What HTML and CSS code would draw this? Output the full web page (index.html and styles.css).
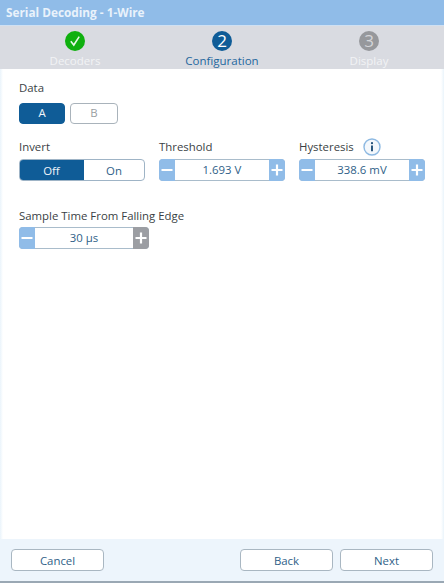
FILE: index.html
```html
<!DOCTYPE html>
<html lang="en">
<head>
<meta charset="utf-8">
<title>Serial Decoding - 1-Wire</title>
<link rel="stylesheet" href="styles.css">
</head>
<body>
<div class="window">
  <header class="titlebar">Serial Decoding - 1-Wire</header>
  <nav class="steps">
    <div class="step">
      <svg class="step-icon" viewBox="0 0 20 20" width="20" height="20"><circle cx="10" cy="10" r="10" fill="#0fb00f"/><path d="M5.8 10.2 8.8 14 14.2 5.6" fill="none" stroke="#e6f7e6" stroke-width="1.6"/></svg>
      <span class="step-label step-label-idle">Decoders</span>
    </div>
    <div class="step">
      <span class="step-num step-num-active">2</span>
      <span class="step-label step-label-active">Configuration</span>
    </div>
    <div class="step">
      <span class="step-num step-num-idle">3</span>
      <span class="step-label step-label-idle">Display</span>
    </div>
  </nav>
  <main class="content">
    <section class="group group-data">
      <div class="label">Data</div>
      <div class="choice">
        <button class="chip chip-on">A</button>
        <button class="chip chip-off">B</button>
      </div>
    </section>
    <section class="row">
      <div class="field">
        <div class="label">Invert</div>
        <div class="toggle">
          <span class="toggle-opt toggle-on">Off</span>
          <span class="toggle-opt">On</span>
        </div>
      </div>
      <div class="field">
        <div class="label">Threshold</div>
        <div class="spin">
          <span class="spin-btn"><svg viewBox="0 0 16 22" width="16" height="22"><path d="M2.5 11h11" stroke="#fff" stroke-width="2.2"/></svg></span>
          <span class="spin-val">1.693 V</span>
          <span class="spin-btn"><svg viewBox="0 0 16 22" width="16" height="22"><path d="M2.5 11h11M8 5.5v11" stroke="#fff" stroke-width="2.2"/></svg></span>
        </div>
      </div>
      <div class="field">
        <div class="label label-info">Hysteresis
          <svg class="info" viewBox="0 0 18 18" width="18" height="18"><circle cx="9" cy="9" r="8" fill="#f4f8fc" stroke="#8db9e2" stroke-width="1.4"/><circle cx="9" cy="5.2" r="1.1" fill="#1f4e78"/><path d="M9 7.6v5.6" stroke="#1f4e78" stroke-width="1.9"/></svg>
        </div>
        <div class="spin">
          <span class="spin-btn"><svg viewBox="0 0 16 22" width="16" height="22"><path d="M2.5 11h11" stroke="#fff" stroke-width="2.2"/></svg></span>
          <span class="spin-val">338.6 mV</span>
          <span class="spin-btn"><svg viewBox="0 0 16 22" width="16" height="22"><path d="M2.5 11h11M8 5.5v11" stroke="#fff" stroke-width="2.2"/></svg></span>
        </div>
      </div>
    </section>
    <section class="group group-sample">
      <div class="label">Sample Time From Falling Edge</div>
      <div class="spin spin-wide">
        <span class="spin-btn"><svg viewBox="0 0 16 22" width="16" height="22"><path d="M2.5 11h11" stroke="#fff" stroke-width="2.2"/></svg></span>
        <span class="spin-val">30 µs</span>
        <span class="spin-btn spin-btn-off"><svg viewBox="0 0 16 22" width="16" height="22"><path d="M2.5 11h11M8 5.5v11" stroke="#fff" stroke-width="2.2"/></svg></span>
      </div>
    </section>
  </main>
  <footer class="footer">
    <button class="action">Cancel</button>
    <div class="footer-right">
      <button class="action">Back</button>
      <button class="action">Next</button>
    </div>
  </footer>
</div>
</body>
</html>
```

FILE: styles.css
```css
* { box-sizing: border-box; }
html, body { margin: 0; padding: 0; }
body { width: 444px; height: 583px; overflow: hidden; background: #fff; font-family: "Open Sans", "Noto Sans", sans-serif; font-size: 11.4px; color: #3a3f45; }
.window { width: 444px; height: 583px; display: flex; flex-direction: column; border-bottom: 2px solid #9aa8b4; }
.titlebar { height: 26px; flex: none; background: #90bce8; border-bottom: 1px solid #cfe0f2; color: #e9f2fb; font-weight: 700; font-size: 11.8px; line-height: 25px; padding-left: 6px; }
.steps { height: 43px; flex: none; display: grid; grid-template-columns: repeat(3, 147px); padding-left: 1.5px; background: #d9dbe1; }
.step { display: flex; flex-direction: column; align-items: center; padding-top: 5px; }
.step-icon { display: block; }
.step-num { width: 20px; height: 20px; border-radius: 50%; display: flex; align-items: center; justify-content: center; font-size: 17px; line-height: 20px; color: #e8eef4; }
.step-num-active { background: #0f5c97; color: #fff; }
.step-num-idle { background: #96989c; color: #d4d5d8; }
.step-label { font-size: 11.5px; line-height: 16px; margin-top: 2px; white-space: nowrap; }
.step-label-idle { color: #f2f3f5; }
.step-label-active { color: #24679e; }
.content { flex: 1; padding: 11px 19px 0; background: linear-gradient(90deg, #eaf4fb 0, #fff 3px, #fff 441px, #eaf4fb 444px); }
.label { line-height: 16px; height: 16px; color: #3a3f45; }
.choice { display: flex; gap: 5px; margin-top: 7px; }
.chip { height: 21px; border-radius: 4px; font: inherit; padding: 0 0 2px; }
.chip-on { width: 46px; background: #0f5c97; border: 1px solid #0f5c97; color: #f0f5fa; }
.chip-off { width: 48px; background: #fff; border: 1px solid #a9b3bb; color: #9a9ea2; }
.row { display: grid; grid-template-columns: 126px 126px 126px; column-gap: 14px; margin-top: 15px; }
.label-info { display: flex; align-items: center; gap: 9px; margin-top: -1px; height: 17px; }
.toggle { display: grid; grid-template-columns: 64px 62px; height: 22px; margin-top: 4px; border: 1px solid #9fb4c6; border-radius: 4px; overflow: hidden; background: #fff; }
.toggle-opt { display: flex; align-items: center; justify-content: center; color: #2f5f88; padding-right: 2px; }
.toggle-on { background: #0f5c97; color: #f0f5fa; margin: -1px 0 -1px -1px; padding-right: 0; }
.spin { display: flex; height: 22px; margin-top: 4px; border-radius: 4px; overflow: hidden; background: #fff; box-shadow: inset 0 0 0 1px #a9bccb; }
.spin-wide { width: 130px; }
.spin-btn { width: 16px; flex: none; background: #90bce8; display: flex; }
.spin-btn-off { background: #9c9ea3; }
.spin-val { flex: 1; text-align: center; line-height: 22px; color: #2f5f88; }
.group-sample { margin-top: 27px; }
.group-sample .spin { margin-top: 3px; }
.footer { height: 42px; flex: none; background: #edf5fc; display: flex; justify-content: space-between; align-items: flex-start; padding: 10px 11px 0; }
.footer-right { display: flex; gap: 7px; }
.action { width: 93px; height: 22px; padding: 0; background: #fff; border: 1px solid #a9b7c2; border-radius: 4px; font: inherit; color: #2f5f88; }
```
